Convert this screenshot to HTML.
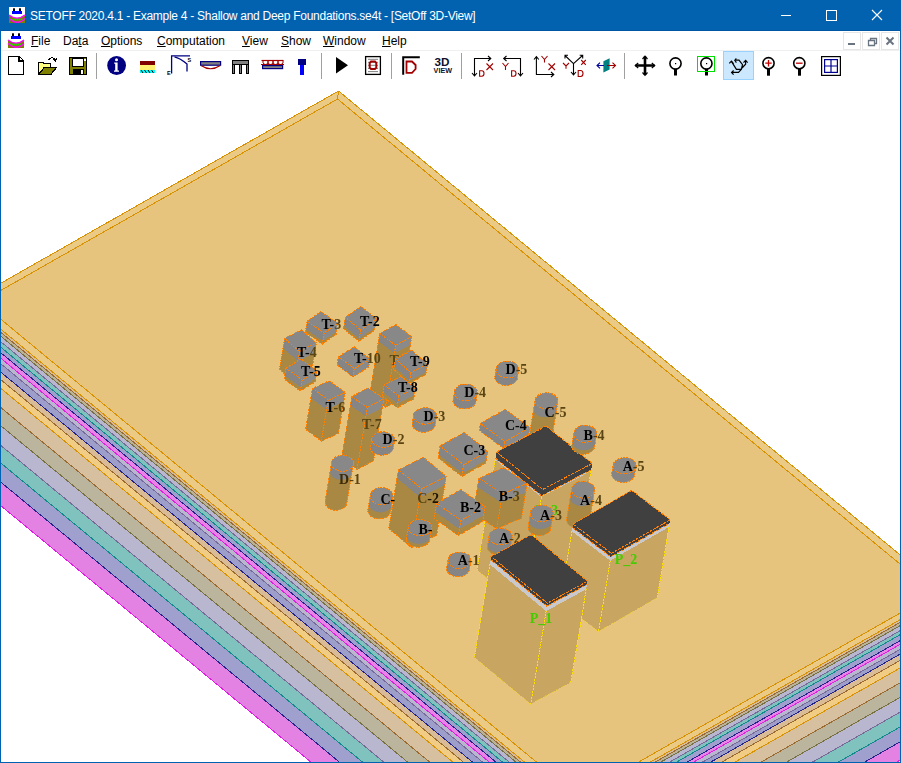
<!DOCTYPE html>
<html><head><meta charset="utf-8">
<style>
html,body{margin:0;padding:0;background:#fff;}
body{width:901px;height:763px;position:relative;overflow:hidden;font-family:"Liberation Sans",sans-serif;}
#title{position:absolute;left:0;top:0;width:901px;height:31px;background:#0262B0;color:#fff;box-shadow:inset 0 -1px 0 #0055A5;}
#title .t{position:absolute;left:30px;top:9px;font-size:12px;line-height:14px;white-space:nowrap;letter-spacing:-0.27px;}
#menu{position:absolute;left:1px;top:31px;width:899px;height:19px;background:#fff;}
#menu span{position:absolute;top:3px;font-size:12px;line-height:14px;color:#000;}
#menu u{text-decoration:underline;text-decoration-thickness:1px;text-underline-offset:1px;}
#sep{position:absolute;left:1px;top:50px;width:899px;height:1px;background:#F0F0F0;}
#tb{position:absolute;left:1px;top:51px;width:899px;height:31px;background:#fff;}
#lb{position:absolute;left:0;top:30px;width:1px;height:733px;background:#0063B1;}
#rb{position:absolute;left:900px;top:30px;width:1px;height:733px;background:#0063B1;}
#bb{position:absolute;left:0;top:762px;width:901px;height:1px;background:#0063B1;}
svg{position:absolute;left:0;top:0;}
text{-webkit-font-smoothing:antialiased;}
#scene{will-change:transform;}
</style></head><body>
<svg id="scene" width="901" height="763" viewBox="0 0 901 763" style="left:0;top:0">
<defs><clipPath id="cv"><rect x="1" y="82" width="899" height="680"/></clipPath></defs>
<g clip-path="url(#cv)" shape-rendering="crispEdges">
<polygon points="338.5,91.0 900.0,554.8 900.0,613.1 578.1,796.6 0.0,318.6 0.0,283.7" fill="#E6C47E"/>
<polygon points="338.5,91.0 900.0,554.8 900.0,564.0 337.5,99.0 0.0,290.9 0.0,283.7" fill="#EBCA86"/>
<polygon points="0.0,318.6 578.1,796.5 578.1,806.4 0.0,328.5" fill="#EBCA86"/>
<polygon points="0.0,328.5 578.1,806.4 578.1,809.6 0.0,331.7" fill="#D9BC96"/>
<polygon points="0.0,331.7 578.1,809.6 578.1,813.5 0.0,335.6" fill="#BAB39A"/>
<polygon points="0.0,335.6 578.1,813.5 578.1,819.0 0.0,341.1" fill="#B9B7D0"/>
<polygon points="0.0,341.1 578.1,819.0 578.1,824.5 0.0,346.6" fill="#80C2BE"/>
<polygon points="0.0,346.6 578.1,824.5 578.1,830.0 0.0,352.1" fill="#A0A0CE"/>
<polygon points="0.0,352.1 578.1,830.0 578.1,835.5 0.0,357.6" fill="#E884E8"/>
<polygon points="0.0,357.6 578.1,835.5 578.1,841.0 0.0,363.1" fill="#B9B7D0"/>
<polygon points="0.0,363.1 578.1,841.0 578.1,849.4 0.0,371.5" fill="#9E9ECA"/>
<polygon points="0.0,371.5 578.1,849.4 578.1,856.9 0.0,379.0" fill="#D9BC96"/>
<polygon points="0.0,379.0 578.1,856.9 578.1,865.6 0.0,387.7" fill="#F0CC85"/>
<polygon points="0.0,387.7 578.1,865.6 578.1,884.8 0.0,406.9" fill="#D6C0A0"/>
<polygon points="0.0,406.9 578.1,884.8 578.1,903.0 0.0,425.1" fill="#BAB59C"/>
<polygon points="0.0,425.1 578.1,903.0 578.1,922.7 0.0,444.8" fill="#B9B7D0"/>
<polygon points="0.0,444.8 578.1,922.7 578.1,940.3 0.0,462.4" fill="#80C2BE"/>
<polygon points="0.0,462.4 578.1,940.3 578.1,959.4 0.0,481.5" fill="#A0A0CE"/>
<polygon points="0.0,481.5 578.1,959.4 578.1,982.9 0.0,505.0" fill="#E482E4"/>
<polygon points="578.1,796.6 900.0,613.1 900.0,619.7 578.1,803.2" fill="#EBCA86"/>
<polygon points="578.1,803.2 900.0,619.7 900.0,622.5 578.1,806.0" fill="#D9BC96"/>
<polygon points="578.1,806.0 900.0,622.5 900.0,625.7 578.1,809.2" fill="#BAB39A"/>
<polygon points="578.1,809.2 900.0,625.7 900.0,630.7 578.1,814.2" fill="#B9B7D0"/>
<polygon points="578.1,814.2 900.0,630.7 900.0,634.7 578.1,818.2" fill="#80C2BE"/>
<polygon points="578.1,818.2 900.0,634.7 900.0,640.7 578.1,824.2" fill="#A0A0CE"/>
<polygon points="578.1,824.2 900.0,640.7 900.0,644.4 578.1,827.9" fill="#E884E8"/>
<polygon points="578.1,827.9 900.0,644.4 900.0,649.5 578.1,833.0" fill="#B9B7D0"/>
<polygon points="578.1,833.0 900.0,649.5 900.0,654.2 578.1,837.7" fill="#9E9ECA"/>
<polygon points="578.1,837.7 900.0,654.2 900.0,660.5 578.1,844.0" fill="#D9BC96"/>
<polygon points="578.1,844.0 900.0,660.5 900.0,668.0 578.1,851.5" fill="#F0CC85"/>
<polygon points="578.1,851.5 900.0,668.0 900.0,682.9 578.1,866.4" fill="#D6C0A0"/>
<polygon points="578.1,866.4 900.0,682.9 900.0,697.4 578.1,880.9" fill="#BAB59C"/>
<polygon points="578.1,880.9 900.0,697.4 900.0,712.2 578.1,895.7" fill="#B9B7D0"/>
<polygon points="578.1,895.7 900.0,712.2 900.0,727.0 578.1,910.5" fill="#80C2BE"/>
<polygon points="578.1,910.5 900.0,727.0 900.0,741.9 578.1,925.4" fill="#A0A0CE"/>
<polygon points="578.1,925.4 900.0,741.9 900.0,760.2 578.1,943.7" fill="#E482E4"/>
<line x1="0.0" y1="318.6" x2="578.1" y2="796.5" stroke="#D89200" stroke-width="1"/>
<line x1="0.0" y1="328.5" x2="578.1" y2="806.4" stroke="#D89200" stroke-width="1"/>
<line x1="0.0" y1="331.7" x2="578.1" y2="809.6" stroke="#9A6A30" stroke-width="1"/>
<line x1="0.0" y1="335.6" x2="578.1" y2="813.5" stroke="#787040" stroke-width="1"/>
<line x1="0.0" y1="341.1" x2="578.1" y2="819.0" stroke="#786A98" stroke-width="1"/>
<line x1="0.0" y1="346.6" x2="578.1" y2="824.5" stroke="#108A8A" stroke-width="1"/>
<line x1="0.0" y1="352.1" x2="578.1" y2="830.0" stroke="#24248A" stroke-width="1"/>
<line x1="0.0" y1="357.6" x2="578.1" y2="835.5" stroke="#E020E0" stroke-width="1"/>
<line x1="0.0" y1="363.1" x2="578.1" y2="841.0" stroke="#786A98" stroke-width="1"/>
<line x1="0.0" y1="371.5" x2="578.1" y2="849.4" stroke="#24248A" stroke-width="1"/>
<line x1="0.0" y1="379.0" x2="578.1" y2="856.9" stroke="#9A6A30" stroke-width="1"/>
<line x1="0.0" y1="387.7" x2="578.1" y2="865.6" stroke="#D89200" stroke-width="1"/>
<line x1="0.0" y1="406.9" x2="578.1" y2="884.8" stroke="#9A6A30" stroke-width="1"/>
<line x1="0.0" y1="425.1" x2="578.1" y2="903.0" stroke="#787040" stroke-width="1"/>
<line x1="0.0" y1="444.8" x2="578.1" y2="922.7" stroke="#786A98" stroke-width="1"/>
<line x1="0.0" y1="462.4" x2="578.1" y2="940.3" stroke="#108A8A" stroke-width="1"/>
<line x1="0.0" y1="481.5" x2="578.1" y2="959.4" stroke="#24248A" stroke-width="1"/>
<line x1="0.0" y1="505.0" x2="578.1" y2="982.9" stroke="#E020E0" stroke-width="1"/>
<line x1="578.1" y1="796.6" x2="900.0" y2="613.1" stroke="#D89200" stroke-width="1"/>
<line x1="578.1" y1="803.2" x2="900.0" y2="619.7" stroke="#D89200" stroke-width="1"/>
<line x1="578.1" y1="806.0" x2="900.0" y2="622.5" stroke="#9A6A30" stroke-width="1"/>
<line x1="578.1" y1="809.2" x2="900.0" y2="625.7" stroke="#787040" stroke-width="1"/>
<line x1="578.1" y1="814.2" x2="900.0" y2="630.7" stroke="#786A98" stroke-width="1"/>
<line x1="578.1" y1="818.2" x2="900.0" y2="634.7" stroke="#108A8A" stroke-width="1"/>
<line x1="578.1" y1="824.2" x2="900.0" y2="640.7" stroke="#24248A" stroke-width="1"/>
<line x1="578.1" y1="827.9" x2="900.0" y2="644.4" stroke="#E020E0" stroke-width="1"/>
<line x1="578.1" y1="833.0" x2="900.0" y2="649.5" stroke="#786A98" stroke-width="1"/>
<line x1="578.1" y1="837.7" x2="900.0" y2="654.2" stroke="#24248A" stroke-width="1"/>
<line x1="578.1" y1="844.0" x2="900.0" y2="660.5" stroke="#9A6A30" stroke-width="1"/>
<line x1="578.1" y1="851.5" x2="900.0" y2="668.0" stroke="#D89200" stroke-width="1"/>
<line x1="578.1" y1="866.4" x2="900.0" y2="682.9" stroke="#9A6A30" stroke-width="1"/>
<line x1="578.1" y1="880.9" x2="900.0" y2="697.4" stroke="#787040" stroke-width="1"/>
<line x1="578.1" y1="895.7" x2="900.0" y2="712.2" stroke="#786A98" stroke-width="1"/>
<line x1="578.1" y1="910.5" x2="900.0" y2="727.0" stroke="#108A8A" stroke-width="1"/>
<line x1="578.1" y1="925.4" x2="900.0" y2="741.9" stroke="#24248A" stroke-width="1"/>
<line x1="578.1" y1="943.7" x2="900.0" y2="760.2" stroke="#E020E0" stroke-width="1"/>
<line x1="0.0" y1="283.7" x2="338.5" y2="91.0" stroke="#D89200" stroke-width="1"/>
<line x1="338.5" y1="91.0" x2="900.0" y2="554.8" stroke="#D89200" stroke-width="1"/>
<line x1="0.0" y1="290.9" x2="337.5" y2="99.0" stroke="#D89200" stroke-width="1"/>
<line x1="337.5" y1="99.0" x2="900.0" y2="564.0" stroke="#D89200" stroke-width="1"/>
<line x1="338.5" y1="91.0" x2="337.5" y2="99.0" stroke="#D89200" stroke-width="1"/>
<polygon points="305.8,329.2 322.9,341.0 322.4,344.0 305.3,332.2" fill="#A98843"/>
<polygon points="322.9,341.0 336.7,331.3 336.2,334.3 322.4,344.0" fill="#A98843"/>
<polygon points="307.1,321.2 324.2,333.0 322.9,341.0 305.8,329.2" fill="#858585"/>
<polygon points="324.2,333.0 338.0,323.3 336.7,331.3 322.9,341.0" fill="#8A8A8A"/>
<polygon points="320.9,311.5 307.1,321.2 324.2,333.0 338.0,323.3" fill="#888888"/>
<polyline points="320.9,311.5 307.1,321.2 324.2,333.0 338.0,323.3 320.9,311.5" fill="none" stroke="#FF8000" stroke-width="1" stroke-dasharray="2,1"/>
<polyline points="307.1,321.2 305.3,332.2 322.4,344.0 336.2,334.3 338.0,323.3" fill="none" stroke="#FF8000" stroke-width="1" stroke-dasharray="2,1"/>
<polyline points="324.2,333.0 322.4,344.0" fill="none" stroke="#FF8000" stroke-width="1" stroke-dasharray="2,1"/>
<text x="321.5" y="328.9" font-family="Liberation Serif" font-weight="bold" font-size="14" text-anchor="start" style="shape-rendering:auto"><tspan fill="#000">T-</tspan><tspan fill="#5A4412">3</tspan></text>
<polygon points="343.9,325.9 359.3,338.5 358.8,341.3 343.4,328.7" fill="#A98843"/>
<polygon points="359.3,338.5 375.1,327.5 374.6,330.3 358.8,341.3" fill="#A98843"/>
<polygon points="345.3,317.3 360.7,329.9 359.3,338.5 343.9,325.9" fill="#858585"/>
<polygon points="360.7,329.9 376.5,318.9 375.1,327.5 359.3,338.5" fill="#8A8A8A"/>
<polygon points="361.1,306.3 345.3,317.3 360.7,329.9 376.5,318.9" fill="#888888"/>
<polyline points="361.1,306.3 345.3,317.3 360.7,329.9 376.5,318.9 361.1,306.3" fill="none" stroke="#FF8000" stroke-width="1" stroke-dasharray="2,1"/>
<polyline points="345.3,317.3 343.4,328.7 358.8,341.3 374.6,330.3 376.5,318.9" fill="none" stroke="#FF8000" stroke-width="1" stroke-dasharray="2,1"/>
<polyline points="360.7,329.9 358.8,341.3" fill="none" stroke="#FF8000" stroke-width="1" stroke-dasharray="2,1"/>
<text x="360" y="326" font-family="Liberation Serif" font-weight="bold" font-size="14" text-anchor="start" style="shape-rendering:auto"><tspan fill="#000">T-2</tspan></text>
<polygon points="283.0,347.8 297.7,361.1 294.2,382.6 279.5,369.3" fill="#A98843"/>
<polygon points="297.7,361.1 314.7,352.4 311.2,373.9 294.2,382.6" fill="#A98843"/>
<polygon points="284.6,338.3 299.3,351.6 297.7,361.1 283.0,347.8" fill="#858585"/>
<polygon points="299.3,351.6 316.3,342.9 314.7,352.4 297.7,361.1" fill="#8A8A8A"/>
<polygon points="301.6,329.6 284.6,338.3 299.3,351.6 316.3,342.9" fill="#888888"/>
<polyline points="301.6,329.6 284.6,338.3 299.3,351.6 316.3,342.9 301.6,329.6" fill="none" stroke="#FF8000" stroke-width="1" stroke-dasharray="2,1"/>
<polyline points="284.6,338.3 279.5,369.3 294.2,382.6 311.2,373.9 316.3,342.9" fill="none" stroke="#FF8000" stroke-width="1" stroke-dasharray="2,1"/>
<polyline points="299.3,351.6 294.2,382.6" fill="none" stroke="#FF8000" stroke-width="1" stroke-dasharray="2,1"/>
<text x="297" y="356.7" font-family="Liberation Serif" font-weight="bold" font-size="14" text-anchor="start" style="shape-rendering:auto"><tspan fill="#000">T-</tspan><tspan fill="#5A4412">4</tspan></text>
<polygon points="338.5,356.6 354.3,368.7 352.9,377.0 337.1,364.9" fill="#858585"/>
<polygon points="354.3,368.7 370.0,358.9 368.6,367.2 352.9,377.0" fill="#8A8A8A"/>
<polygon points="354.2,346.8 338.5,356.6 354.3,368.7 370.0,358.9" fill="#888888"/>
<polyline points="354.2,346.8 338.5,356.6 354.3,368.7 370.0,358.9 354.2,346.8" fill="none" stroke="#FF8000" stroke-width="1" stroke-dasharray="2,1"/>
<polyline points="338.5,356.6 337.1,364.9 352.9,377.0 368.6,367.2 370.0,358.9" fill="none" stroke="#FF8000" stroke-width="1" stroke-dasharray="2,1"/>
<polyline points="354.3,368.7 352.9,377.0" fill="none" stroke="#FF8000" stroke-width="1" stroke-dasharray="2,1"/>
<polygon points="378.4,341.3 394.4,353.3 385.5,407.3 369.5,395.3" fill="#A98843"/>
<polygon points="394.4,353.3 410.5,344.6 401.6,398.6 385.5,407.3" fill="#A98843"/>
<polygon points="379.7,333.3 395.7,345.3 394.4,353.3 378.4,341.3" fill="#858585"/>
<polygon points="395.7,345.3 411.8,336.6 410.5,344.6 394.4,353.3" fill="#8A8A8A"/>
<polygon points="395.8,324.6 379.7,333.3 395.7,345.3 411.8,336.6" fill="#888888"/>
<polyline points="395.8,324.6 379.7,333.3 395.7,345.3 411.8,336.6 395.8,324.6" fill="none" stroke="#FF8000" stroke-width="1" stroke-dasharray="2,1"/>
<polyline points="379.7,333.3 369.5,395.3 385.5,407.3 401.6,398.6 411.8,336.6" fill="none" stroke="#FF8000" stroke-width="1" stroke-dasharray="2,1"/>
<polyline points="395.7,345.3 385.5,407.3" fill="none" stroke="#FF8000" stroke-width="1" stroke-dasharray="2,1"/>
<text x="389.5" y="364.5" font-family="Liberation Serif" font-weight="bold" font-size="14" text-anchor="start" style="shape-rendering:auto"><tspan fill="#5A4412">T</tspan></text>
<text x="354" y="362.8" font-family="Liberation Serif" font-weight="bold" font-size="14" text-anchor="start" style="shape-rendering:auto"><tspan fill="#000">T-</tspan><tspan fill="#5A4412">10</tspan></text>
<polygon points="284.8,375.5 300.9,387.4 300.3,391.0 284.2,379.1" fill="#A98843"/>
<polygon points="300.9,387.4 316.0,378.3 315.4,381.9 300.3,391.0" fill="#A98843"/>
<polygon points="286.0,368.1 302.1,380.0 300.9,387.4 284.8,375.5" fill="#858585"/>
<polygon points="302.1,380.0 317.2,370.9 316.0,378.3 300.9,387.4" fill="#8A8A8A"/>
<polygon points="301.1,359.0 286.0,368.1 302.1,380.0 317.2,370.9" fill="#888888"/>
<polyline points="301.1,359.0 286.0,368.1 302.1,380.0 317.2,370.9 301.1,359.0" fill="none" stroke="#FF8000" stroke-width="1" stroke-dasharray="2,1"/>
<polyline points="286.0,368.1 284.2,379.1 300.3,391.0 315.4,381.9 317.2,370.9" fill="none" stroke="#FF8000" stroke-width="1" stroke-dasharray="2,1"/>
<polyline points="302.1,380.0 300.3,391.0" fill="none" stroke="#FF8000" stroke-width="1" stroke-dasharray="2,1"/>
<text x="301" y="375.5" font-family="Liberation Serif" font-weight="bold" font-size="14" text-anchor="start" style="shape-rendering:auto"><tspan fill="#000">T-5</tspan></text>
<polygon points="394.0,366.6 409.6,380.6 409.2,383.3 393.6,369.3" fill="#A98843"/>
<polygon points="409.6,380.6 426.1,372.0 425.7,374.7 409.2,383.3" fill="#A98843"/>
<polygon points="395.3,358.8 410.9,372.8 409.6,380.6 394.0,366.6" fill="#858585"/>
<polygon points="410.9,372.8 427.4,364.2 426.1,372.0 409.6,380.6" fill="#8A8A8A"/>
<polygon points="411.8,350.2 395.3,358.8 410.9,372.8 427.4,364.2" fill="#888888"/>
<polyline points="411.8,350.2 395.3,358.8 410.9,372.8 427.4,364.2 411.8,350.2" fill="none" stroke="#FF8000" stroke-width="1" stroke-dasharray="2,1"/>
<polyline points="395.3,358.8 393.6,369.3 409.2,383.3 425.7,374.7 427.4,364.2" fill="none" stroke="#FF8000" stroke-width="1" stroke-dasharray="2,1"/>
<polyline points="410.9,372.8 409.2,383.3" fill="none" stroke="#FF8000" stroke-width="1" stroke-dasharray="2,1"/>
<text x="410" y="366.4" font-family="Liberation Serif" font-weight="bold" font-size="14" text-anchor="start" style="shape-rendering:auto"><tspan fill="#000">T-9</tspan></text>
<polygon points="310.9,397.8 326.6,409.6 321.4,441.1 305.7,429.3" fill="#A98843"/>
<polygon points="326.6,409.6 343.6,402.0 338.4,433.5 321.4,441.1" fill="#A98843"/>
<polygon points="312.5,388.3 328.2,400.1 326.6,409.6 310.9,397.8" fill="#858585"/>
<polygon points="328.2,400.1 345.2,392.5 343.6,402.0 326.6,409.6" fill="#8A8A8A"/>
<polygon points="329.5,380.7 312.5,388.3 328.2,400.1 345.2,392.5" fill="#888888"/>
<polyline points="329.5,380.7 312.5,388.3 328.2,400.1 345.2,392.5 329.5,380.7" fill="none" stroke="#FF8000" stroke-width="1" stroke-dasharray="2,1"/>
<polyline points="312.5,388.3 305.7,429.3 321.4,441.1 338.4,433.5 345.2,392.5" fill="none" stroke="#FF8000" stroke-width="1" stroke-dasharray="2,1"/>
<polyline points="328.2,400.1 321.4,441.1" fill="none" stroke="#FF8000" stroke-width="1" stroke-dasharray="2,1"/>
<text x="325.5" y="411.7" font-family="Liberation Serif" font-weight="bold" font-size="14" text-anchor="start" style="shape-rendering:auto"><tspan fill="#000">T</tspan><tspan fill="#5A4412">-6</tspan></text>
<polygon points="383.1,392.2 397.7,403.7 397.0,407.7 382.4,396.2" fill="#A98843"/>
<polygon points="397.7,403.7 414.3,395.4 413.6,399.4 397.0,407.7" fill="#A98843"/>
<polygon points="384.3,384.7 398.9,396.2 397.7,403.7 383.1,392.2" fill="#858585"/>
<polygon points="398.9,396.2 415.5,387.9 414.3,395.4 397.7,403.7" fill="#8A8A8A"/>
<polygon points="400.9,376.4 384.3,384.7 398.9,396.2 415.5,387.9" fill="#888888"/>
<polyline points="400.9,376.4 384.3,384.7 398.9,396.2 415.5,387.9 400.9,376.4" fill="none" stroke="#FF8000" stroke-width="1" stroke-dasharray="2,1"/>
<polyline points="384.3,384.7 382.4,396.2 397.0,407.7 413.6,399.4 415.5,387.9" fill="none" stroke="#FF8000" stroke-width="1" stroke-dasharray="2,1"/>
<polyline points="398.9,396.2 397.0,407.7" fill="none" stroke="#FF8000" stroke-width="1" stroke-dasharray="2,1"/>
<text x="398" y="391.7" font-family="Liberation Serif" font-weight="bold" font-size="14" text-anchor="start" style="shape-rendering:auto"><tspan fill="#000">T-8</tspan></text>
<polygon points="350.3,405.2 365.8,416.2 357.0,469.5 341.5,458.5" fill="#A98843"/>
<polygon points="365.8,416.2 382.4,407.5 373.6,460.8 357.0,469.5" fill="#A98843"/>
<polygon points="351.7,396.5 367.2,407.5 365.8,416.2 350.3,405.2" fill="#858585"/>
<polygon points="367.2,407.5 383.8,398.8 382.4,407.5 365.8,416.2" fill="#8A8A8A"/>
<polygon points="368.3,387.8 351.7,396.5 367.2,407.5 383.8,398.8" fill="#888888"/>
<polyline points="368.3,387.8 351.7,396.5 367.2,407.5 383.8,398.8 368.3,387.8" fill="none" stroke="#FF8000" stroke-width="1" stroke-dasharray="2,1"/>
<polyline points="351.7,396.5 341.5,458.5 357.0,469.5 373.6,460.8 383.8,398.8" fill="none" stroke="#FF8000" stroke-width="1" stroke-dasharray="2,1"/>
<polyline points="367.2,407.5 357.0,469.5" fill="none" stroke="#FF8000" stroke-width="1" stroke-dasharray="2,1"/>
<text x="362" y="428.6" font-family="Liberation Serif" font-weight="bold" font-size="14" text-anchor="start" style="shape-rendering:auto"><tspan fill="#5A4412">T-7</tspan></text>
<path d="M496.0,369.5 L494.8,377.0 A11.4,8.5 0 0 0 517.6,377.0 L518.8,369.5 Z" fill="#858585" style="shape-rendering:auto"/>
<ellipse cx="507.4" cy="369.5" rx="11.4" ry="8.5" fill="#888888" stroke="#FF8000" stroke-width="1" stroke-dasharray="2,1"/>
<path d="M496.0,369.5 L494.8,377.0 A11.4,8.5 0 0 0 517.6,377.0 L518.8,369.5" fill="none" stroke="#FF8000" stroke-width="1" stroke-dasharray="2,1"/>
<text x="505.5" y="373.9" font-family="Liberation Serif" font-weight="bold" font-size="14" text-anchor="start" style="shape-rendering:auto"><tspan fill="#000">D</tspan><tspan fill="#5A4412">-5</tspan></text>
<path d="M454.2,392.5 L452.9,400.5 A11.6,8.5 0 0 0 476.1,400.5 L477.4,392.5 Z" fill="#858585" style="shape-rendering:auto"/>
<ellipse cx="465.8" cy="392.5" rx="11.6" ry="8.5" fill="#888888" stroke="#FF8000" stroke-width="1" stroke-dasharray="2,1"/>
<path d="M454.2,392.5 L452.9,400.5 A11.6,8.5 0 0 0 476.1,400.5 L477.4,392.5" fill="none" stroke="#FF8000" stroke-width="1" stroke-dasharray="2,1"/>
<text x="464.3" y="396.9" font-family="Liberation Serif" font-weight="bold" font-size="14" text-anchor="start" style="shape-rendering:auto"><tspan fill="#000">D</tspan><tspan fill="#5A4412">-4</tspan></text>
<path d="M413.3,416.0 L412.0,424.0 A11.7,8.2 0 0 0 435.4,424.0 L436.7,416.0 Z" fill="#858585" style="shape-rendering:auto"/>
<ellipse cx="425" cy="416" rx="11.7" ry="8.2" fill="#888888" stroke="#FF8000" stroke-width="1" stroke-dasharray="2,1"/>
<path d="M413.3,416.0 L412.0,424.0 A11.7,8.2 0 0 0 435.4,424.0 L436.7,416.0" fill="none" stroke="#FF8000" stroke-width="1" stroke-dasharray="2,1"/>
<text x="423.5" y="420.5" font-family="Liberation Serif" font-weight="bold" font-size="14" text-anchor="start" style="shape-rendering:auto"><tspan fill="#000">D</tspan><tspan fill="#5A4412">-3</tspan></text>
<path d="M371.7,439.6 L370.4,447.4 A11.5,7.8 0 0 0 393.4,447.4 L394.7,439.6 Z" fill="#858585" style="shape-rendering:auto"/>
<ellipse cx="383.2" cy="439.6" rx="11.5" ry="7.8" fill="#888888" stroke="#FF8000" stroke-width="1" stroke-dasharray="2,1"/>
<path d="M371.7,439.6 L370.4,447.4 A11.5,7.8 0 0 0 393.4,447.4 L394.7,439.6" fill="none" stroke="#FF8000" stroke-width="1" stroke-dasharray="2,1"/>
<text x="382.6" y="443.8" font-family="Liberation Serif" font-weight="bold" font-size="14" text-anchor="start" style="shape-rendering:auto"><tspan fill="#000">D</tspan><tspan fill="#5A4412">-2</tspan></text>
<path d="M533.6,409.3 L528.4,440.8 A11.5,8.0 0 0 0 551.4,440.8 L556.6,409.3 Z" fill="#A98843" style="shape-rendering:auto"/>
<path d="M535.0,400.8 L533.6,409.3 A11.5,8.0 0 0 0 556.6,409.3 L558.0,400.8 Z" fill="#858585" style="shape-rendering:auto"/>
<ellipse cx="546.5" cy="400.8" rx="11.5" ry="8.0" fill="#888888" stroke="#FF8000" stroke-width="1" stroke-dasharray="2,1"/>
<path d="M535.0,400.8 L528.4,440.8 A11.5,8.0 0 0 0 551.4,440.8 L558.0,400.8" fill="none" stroke="#FF8000" stroke-width="1" stroke-dasharray="2,1"/>
<text x="544.6" y="416.7" font-family="Liberation Serif" font-weight="bold" font-size="14" text-anchor="start" style="shape-rendering:auto"><tspan fill="#000">C</tspan><tspan fill="#5A4412">-5</tspan></text>
<polygon points="480.4,423.4 505.1,441.7 503.9,448.7 479.2,430.4" fill="#858585"/>
<polygon points="505.1,441.7 529.9,427.5 528.7,434.5 503.9,448.7" fill="#8A8A8A"/>
<polygon points="505.2,409.2 480.4,423.4 505.1,441.7 529.9,427.5" fill="#888888"/>
<polyline points="505.2,409.2 480.4,423.4 505.1,441.7 529.9,427.5 505.2,409.2" fill="none" stroke="#FF8000" stroke-width="1" stroke-dasharray="2,1"/>
<polyline points="480.4,423.4 479.2,430.4 503.9,448.7 528.7,434.5 529.9,427.5" fill="none" stroke="#FF8000" stroke-width="1" stroke-dasharray="2,1"/>
<polyline points="505.1,441.7 503.9,448.7" fill="none" stroke="#FF8000" stroke-width="1" stroke-dasharray="2,1"/>
<text x="504.9" y="429.9" font-family="Liberation Serif" font-weight="bold" font-size="14" text-anchor="start" style="shape-rendering:auto"><tspan fill="#000">C-4</tspan></text>
<path d="M330.0,471.8 L325.0,502.3 A11,8 0 0 0 347.0,502.3 L352.0,471.8 Z" fill="#A98843" style="shape-rendering:auto"/>
<path d="M331.4,463.3 L330.0,471.8 A11,8 0 0 0 352.0,471.8 L353.4,463.3 Z" fill="#858585" style="shape-rendering:auto"/>
<ellipse cx="342.4" cy="463.3" rx="11" ry="8" fill="#888888" stroke="#FF8000" stroke-width="1" stroke-dasharray="2,1"/>
<path d="M331.4,463.3 L325.0,502.3 A11,8 0 0 0 347.0,502.3 L353.4,463.3" fill="none" stroke="#FF8000" stroke-width="1" stroke-dasharray="2,1"/>
<text x="339" y="483.7" font-family="Liberation Serif" font-weight="bold" font-size="14" text-anchor="start" style="shape-rendering:auto"><tspan fill="#3A2A08">D</tspan><tspan fill="#5A4412">-1</tspan></text>
<polygon points="495.2,459.6 541.3,497.1 523.1,607.5 477.0,570.0" fill="#C8A661"/>
<polygon points="541.3,497.1 591.0,471.1 572.8,581.5 523.1,607.5" fill="#C8A661"/>
<polygon points="495.5,458.3 541.6,495.8 541.3,497.1 495.2,459.6" fill="#C9C9CD"/>
<polygon points="541.6,495.8 591.3,469.8 591.0,471.1 541.3,497.1" fill="#C9C9CD"/>
<polygon points="546.2,426.0 496.5,452.0 495.5,458.3 541.6,495.8 591.3,469.8 592.3,463.5" fill="#404040"/>
<polyline points="546.2,426.0 496.5,452.0 542.6,489.5 592.3,463.5 546.2,426.0" fill="none" stroke="#FF8000" stroke-width="1" stroke-dasharray="3,1"/>
<polyline points="495.5,458.3 541.6,495.8 591.3,469.8" fill="none" stroke="#FF8000" stroke-width="1" stroke-dasharray="3,1"/>
<polyline points="495.2,459.6 477.0,570.0" fill="none" stroke="#FFE000" stroke-width="1" stroke-dasharray="2,1"/>
<polyline points="591.0,471.1 572.8,581.5" fill="none" stroke="#FFE000" stroke-width="1" stroke-dasharray="2,1"/>
<polyline points="477.0,570.0 523.1,607.5 572.8,581.5" fill="none" stroke="#FFE000" stroke-width="1" stroke-dasharray="2,1" stroke-opacity="0.35"/>
<polyline points="541.3,497.1 523.1,607.5" fill="none" stroke="#FFE000" stroke-width="1" stroke-dasharray="2,1"/>
<path d="M572.4,441.7 L571.7,445.7 A11.5,8.6 0 0 0 594.7,445.7 L595.4,441.7 Z" fill="#A98843" style="shape-rendering:auto"/>
<path d="M573.7,433.7 L572.4,441.7 A11.5,8.6 0 0 0 595.4,441.7 L596.7,433.7 Z" fill="#858585" style="shape-rendering:auto"/>
<ellipse cx="585.2" cy="433.7" rx="11.5" ry="8.6" fill="#888888" stroke="#FF8000" stroke-width="1" stroke-dasharray="2,1"/>
<path d="M573.7,433.7 L571.7,445.7 A11.5,8.6 0 0 0 594.7,445.7 L596.7,433.7" fill="none" stroke="#FF8000" stroke-width="1" stroke-dasharray="2,1"/>
<text x="583.6" y="439.9" font-family="Liberation Serif" font-weight="bold" font-size="14" text-anchor="start" style="shape-rendering:auto"><tspan fill="#000">B</tspan><tspan fill="#5A4412">-4</tspan></text>
<polygon points="438.6,454.5 462.2,473.4 461.7,476.6 438.1,457.7" fill="#A98843"/>
<polygon points="462.2,473.4 486.4,459.9 485.9,463.1 461.7,476.6" fill="#A98843"/>
<polygon points="440.0,445.9 463.6,464.8 462.2,473.4 438.6,454.5" fill="#858585"/>
<polygon points="463.6,464.8 487.8,451.3 486.4,459.9 462.2,473.4" fill="#8A8A8A"/>
<polygon points="464.2,432.4 440.0,445.9 463.6,464.8 487.8,451.3" fill="#888888"/>
<polyline points="464.2,432.4 440.0,445.9 463.6,464.8 487.8,451.3 464.2,432.4" fill="none" stroke="#FF8000" stroke-width="1" stroke-dasharray="2,1"/>
<polyline points="440.0,445.9 438.1,457.7 461.7,476.6 485.9,463.1 487.8,451.3" fill="none" stroke="#FF8000" stroke-width="1" stroke-dasharray="2,1"/>
<polyline points="463.6,464.8 461.7,476.6" fill="none" stroke="#FF8000" stroke-width="1" stroke-dasharray="2,1"/>
<text x="463.4" y="454.8" font-family="Liberation Serif" font-weight="bold" font-size="14" text-anchor="start" style="shape-rendering:auto"><tspan fill="#000">C-3</tspan></text>
<polygon points="397.0,478.2 420.0,497.2 411.7,547.7 388.7,528.7" fill="#A98843"/>
<polygon points="420.0,497.2 444.9,484.7 436.6,535.2 411.7,547.7" fill="#A98843"/>
<polygon points="398.4,469.7 421.4,488.7 420.0,497.2 397.0,478.2" fill="#858585"/>
<polygon points="421.4,488.7 446.3,476.2 444.9,484.7 420.0,497.2" fill="#8A8A8A"/>
<polygon points="423.3,457.2 398.4,469.7 421.4,488.7 446.3,476.2" fill="#888888"/>
<polyline points="423.3,457.2 398.4,469.7 421.4,488.7 446.3,476.2 423.3,457.2" fill="none" stroke="#FF8000" stroke-width="1" stroke-dasharray="2,1"/>
<polyline points="398.4,469.7 388.7,528.7 411.7,547.7 436.6,535.2 446.3,476.2" fill="none" stroke="#FF8000" stroke-width="1" stroke-dasharray="2,1"/>
<polyline points="421.4,488.7 411.7,547.7" fill="none" stroke="#FF8000" stroke-width="1" stroke-dasharray="2,1"/>
<text x="417.2" y="503.1" font-family="Liberation Serif" font-weight="bold" font-size="14" text-anchor="start" style="shape-rendering:auto"><tspan fill="#5A4412">C</tspan><tspan fill="#1A1204">-2</tspan></text>
<path d="M368.9,504.0 L367.8,510.5 A11.5,8.5 0 0 0 390.8,510.5 L391.9,504.0 Z" fill="#A98843" style="shape-rendering:auto"/>
<path d="M370.2,496.0 L368.9,504.0 A11.5,8.5 0 0 0 391.9,504.0 L393.2,496.0 Z" fill="#858585" style="shape-rendering:auto"/>
<ellipse cx="381.7" cy="496" rx="11.5" ry="8.5" fill="#888888" stroke="#FF8000" stroke-width="1" stroke-dasharray="2,1"/>
<path d="M370.2,496.0 L367.8,510.5 A11.5,8.5 0 0 0 390.8,510.5 L393.2,496.0" fill="none" stroke="#FF8000" stroke-width="1" stroke-dasharray="2,1"/>
<text x="380.5" y="503.7" font-family="Liberation Serif" font-weight="bold" font-size="14" text-anchor="start" style="shape-rendering:auto"><tspan fill="#000">C-</tspan></text>
<path d="M613.1,465.8 L611.7,474.3 A11.5,8.2 0 0 0 634.7,474.3 L636.1,465.8 Z" fill="#858585" style="shape-rendering:auto"/>
<ellipse cx="624.6" cy="465.8" rx="11.5" ry="8.2" fill="#888888" stroke="#FF8000" stroke-width="1" stroke-dasharray="2,1"/>
<path d="M613.1,465.8 L611.7,474.3 A11.5,8.2 0 0 0 634.7,474.3 L636.1,465.8" fill="none" stroke="#FF8000" stroke-width="1" stroke-dasharray="2,1"/>
<text x="622.7" y="471.4" font-family="Liberation Serif" font-weight="bold" font-size="14" text-anchor="start" style="shape-rendering:auto"><tspan fill="#000">A</tspan><tspan fill="#5A4412">-5</tspan></text>
<polygon points="477.4,487.1 501.0,502.8 496.7,528.8 473.1,513.1" fill="#A98843"/>
<polygon points="501.0,502.8 525.7,492.3 521.4,518.3 496.7,528.8" fill="#A98843"/>
<polygon points="478.9,478.1 502.5,493.8 501.0,502.8 477.4,487.1" fill="#858585"/>
<polygon points="502.5,493.8 527.2,483.3 525.7,492.3 501.0,502.8" fill="#8A8A8A"/>
<polygon points="503.6,467.6 478.9,478.1 502.5,493.8 527.2,483.3" fill="#888888"/>
<polyline points="503.6,467.6 478.9,478.1 502.5,493.8 527.2,483.3 503.6,467.6" fill="none" stroke="#FF8000" stroke-width="1" stroke-dasharray="2,1"/>
<polyline points="478.9,478.1 473.1,513.1 496.7,528.8 521.4,518.3 527.2,483.3" fill="none" stroke="#FF8000" stroke-width="1" stroke-dasharray="2,1"/>
<polyline points="502.5,493.8 496.7,528.8" fill="none" stroke="#FF8000" stroke-width="1" stroke-dasharray="2,1"/>
<text x="498.7" y="501.2" font-family="Liberation Serif" font-weight="bold" font-size="14" text-anchor="start" style="shape-rendering:auto"><tspan fill="#000">B-</tspan><tspan fill="#5A4412">3</tspan></text>
<polygon points="435.2,511.9 459.4,529.0 458.3,535.5 434.1,518.4" fill="#A98843"/>
<polygon points="459.4,529.0 483.6,515.2 482.5,521.7 458.3,535.5" fill="#A98843"/>
<polygon points="436.6,503.4 460.8,520.5 459.4,529.0 435.2,511.9" fill="#858585"/>
<polygon points="460.8,520.5 485.0,506.7 483.6,515.2 459.4,529.0" fill="#8A8A8A"/>
<polygon points="460.8,489.6 436.6,503.4 460.8,520.5 485.0,506.7" fill="#888888"/>
<polyline points="460.8,489.6 436.6,503.4 460.8,520.5 485.0,506.7 460.8,489.6" fill="none" stroke="#FF8000" stroke-width="1" stroke-dasharray="2,1"/>
<polyline points="436.6,503.4 434.1,518.4 458.3,535.5 482.5,521.7 485.0,506.7" fill="none" stroke="#FF8000" stroke-width="1" stroke-dasharray="2,1"/>
<polyline points="460.8,520.5 458.3,535.5" fill="none" stroke="#FF8000" stroke-width="1" stroke-dasharray="2,1"/>
<text x="459.9" y="512" font-family="Liberation Serif" font-weight="bold" font-size="14" text-anchor="start" style="shape-rendering:auto"><tspan fill="#000">B-2</tspan></text>
<path d="M406.9,535.7 L406.3,539.0 A11.8,8.2 0 0 0 429.9,539.0 L430.5,535.7 Z" fill="#A98843" style="shape-rendering:auto"/>
<path d="M408.2,527.7 L406.9,535.7 A11.8,8.2 0 0 0 430.5,535.7 L431.8,527.7 Z" fill="#858585" style="shape-rendering:auto"/>
<ellipse cx="420" cy="527.7" rx="11.8" ry="8.2" fill="#888888" stroke="#FF8000" stroke-width="1" stroke-dasharray="2,1"/>
<path d="M408.2,527.7 L406.3,539.0 A11.8,8.2 0 0 0 429.9,539.0 L431.8,527.7" fill="none" stroke="#FF8000" stroke-width="1" stroke-dasharray="2,1"/>
<text x="418.5" y="533.9" font-family="Liberation Serif" font-weight="bold" font-size="14" text-anchor="start" style="shape-rendering:auto"><tspan fill="#000">B-</tspan></text>
<path d="M570.2,497.7 L566.5,519.7 A11.6,8.5 0 0 0 589.8,519.7 L593.4,497.7 Z" fill="#A98843" style="shape-rendering:auto"/>
<path d="M571.5,489.7 L570.2,497.7 A11.6,8.5 0 0 0 593.4,497.7 L594.7,489.7 Z" fill="#858585" style="shape-rendering:auto"/>
<ellipse cx="583.1" cy="489.7" rx="11.6" ry="8.5" fill="#888888" stroke="#FF8000" stroke-width="1" stroke-dasharray="2,1"/>
<path d="M571.5,489.7 L566.5,519.7 A11.6,8.5 0 0 0 589.8,519.7 L594.7,489.7" fill="none" stroke="#FF8000" stroke-width="1" stroke-dasharray="2,1"/>
<text x="580.1" y="504.8" font-family="Liberation Serif" font-weight="bold" font-size="14" text-anchor="start" style="shape-rendering:auto"><tspan fill="#000">A</tspan><tspan fill="#5A4412">-4</tspan></text>
<text x="535.5" y="514.5" font-family="Liberation Serif" font-weight="bold" font-size="14" text-anchor="start" style="shape-rendering:auto"><tspan fill="#44CC00">P_3</tspan></text>
<path d="M529.0,520.9 L527.9,527.4 A11.5,8.3 0 0 0 550.9,527.4 L552.0,520.9 Z" fill="#A98843" style="shape-rendering:auto"/>
<path d="M530.2,513.4 L529.0,520.9 A11.5,8.3 0 0 0 552.0,520.9 L553.2,513.4 Z" fill="#858585" style="shape-rendering:auto"/>
<ellipse cx="541.7" cy="513.4" rx="11.5" ry="8.3" fill="#888888" stroke="#FF8000" stroke-width="1" stroke-dasharray="2,1"/>
<path d="M530.2,513.4 L527.9,527.4 A11.5,8.3 0 0 0 550.9,527.4 L553.2,513.4" fill="none" stroke="#FF8000" stroke-width="1" stroke-dasharray="2,1"/>
<text x="540.1" y="520.3" font-family="Liberation Serif" font-weight="bold" font-size="14" text-anchor="start" style="shape-rendering:auto"><tspan fill="#000">A</tspan><tspan fill="#5A4412">-3</tspan></text>
<path d="M487.6,544.7 L487.3,546.9 A11.6,8.3 0 0 0 510.5,546.9 L510.8,544.7 Z" fill="#A98843" style="shape-rendering:auto"/>
<path d="M489.0,536.5 L487.6,544.7 A11.6,8.3 0 0 0 510.8,544.7 L512.2,536.5 Z" fill="#858585" style="shape-rendering:auto"/>
<ellipse cx="500.6" cy="536.5" rx="11.6" ry="8.3" fill="#888888" stroke="#FF8000" stroke-width="1" stroke-dasharray="2,1"/>
<path d="M489.0,536.5 L487.3,546.9 A11.6,8.3 0 0 0 510.5,546.9 L512.2,536.5" fill="none" stroke="#FF8000" stroke-width="1" stroke-dasharray="2,1"/>
<text x="499" y="543.3" font-family="Liberation Serif" font-weight="bold" font-size="14" text-anchor="start" style="shape-rendering:auto"><tspan fill="#000">A</tspan><tspan fill="#5A4412">-2</tspan></text>
<polygon points="571.8,531.3 610.2,560.7 598.5,631.4 560.1,602.0" fill="#C8A661"/>
<polygon points="610.2,560.7 668.9,527.1 657.2,597.8 598.5,631.4" fill="#C8A661"/>
<polygon points="572.4,527.5 610.8,556.9 610.2,560.7 571.8,531.3" fill="#C9C9CD"/>
<polygon points="610.8,556.9 669.5,523.3 668.9,527.1 610.2,560.7" fill="#C9C9CD"/>
<polygon points="631.7,490.4 573.0,524.0 572.4,527.5 610.8,556.9 669.5,523.3 670.1,519.8" fill="#404040"/>
<polyline points="631.7,490.4 573.0,524.0 611.4,553.4 670.1,519.8 631.7,490.4" fill="none" stroke="#FF8000" stroke-width="1" stroke-dasharray="3,1"/>
<polyline points="572.4,527.5 610.8,556.9 669.5,523.3" fill="none" stroke="#FF8000" stroke-width="1" stroke-dasharray="3,1"/>
<polyline points="571.8,531.3 560.1,602.0" fill="none" stroke="#FFE000" stroke-width="1" stroke-dasharray="2,1"/>
<polyline points="668.9,527.1 657.2,597.8" fill="none" stroke="#FFE000" stroke-width="1" stroke-dasharray="2,1"/>
<polyline points="560.1,602.0 598.5,631.4 657.2,597.8" fill="none" stroke="#FFE000" stroke-width="1" stroke-dasharray="2,1" stroke-opacity="0.35"/>
<polyline points="610.2,560.7 598.5,631.4" fill="none" stroke="#FFE000" stroke-width="1" stroke-dasharray="2,1"/>
<text x="614.7" y="563.9" font-family="Liberation Serif" font-weight="bold" font-size="14" text-anchor="start" style="shape-rendering:auto"><tspan fill="#44CC00">P_2</tspan></text>
<path d="M448.0,560.3 L446.6,568.5 A11.5,8.3 0 0 0 469.6,568.5 L471.0,560.3 Z" fill="#858585" style="shape-rendering:auto"/>
<ellipse cx="459.5" cy="560.3" rx="11.5" ry="8.3" fill="#888888" stroke="#FF8000" stroke-width="1" stroke-dasharray="2,1"/>
<path d="M448.0,560.3 L446.6,568.5 A11.5,8.3 0 0 0 469.6,568.5 L471.0,560.3" fill="none" stroke="#FF8000" stroke-width="1" stroke-dasharray="2,1"/>
<text x="457.8" y="565" font-family="Liberation Serif" font-weight="bold" font-size="14" text-anchor="start" style="shape-rendering:auto"><tspan fill="#000">A</tspan><tspan fill="#5A4412">-1</tspan></text>
<polygon points="489.9,564.5 546.1,611.1 530.7,704.1 474.5,657.5" fill="#C8A661"/>
<polygon points="546.1,611.1 586.2,589.3 570.8,682.3 530.7,704.1" fill="#C8A661"/>
<polygon points="490.7,559.6 546.9,606.2 546.1,611.1 489.9,564.5" fill="#C9C9CD"/>
<polygon points="546.9,606.2 587.0,584.4 586.2,589.3 546.1,611.1" fill="#C9C9CD"/>
<polygon points="531.3,534.7 491.2,556.5 490.7,559.6 546.9,606.2 587.0,584.4 587.5,581.3" fill="#404040"/>
<polyline points="531.3,534.7 491.2,556.5 547.4,603.1 587.5,581.3 531.3,534.7" fill="none" stroke="#FF8000" stroke-width="1" stroke-dasharray="3,1"/>
<polyline points="490.7,559.6 546.9,606.2 587.0,584.4" fill="none" stroke="#FF8000" stroke-width="1" stroke-dasharray="3,1"/>
<polyline points="489.9,564.5 474.5,657.5" fill="none" stroke="#FFE000" stroke-width="1" stroke-dasharray="2,1"/>
<polyline points="586.2,589.3 570.8,682.3" fill="none" stroke="#FFE000" stroke-width="1" stroke-dasharray="2,1"/>
<polyline points="474.5,657.5 530.7,704.1 570.8,682.3" fill="none" stroke="#FFE000" stroke-width="1" stroke-dasharray="2,1" stroke-opacity="0.35"/>
<polyline points="546.1,611.1 530.7,704.1" fill="none" stroke="#FFE000" stroke-width="1" stroke-dasharray="2,1"/>
<text x="529.8" y="623.2" font-family="Liberation Serif" font-weight="bold" font-size="14" text-anchor="start" style="shape-rendering:auto"><tspan fill="#44CC00">P_1</tspan></text>
</g>
</svg>
<div id="title"><div class="t">SETOFF 2020.4.1 - Example 4 - Shallow and Deep Foundations.se4t - [SetOff 3D-View]</div></div>
<div id="menu">
<span style="left:30px"><u>F</u>ile</span>
<span style="left:62px">Da<u>t</u>a</span>
<span style="left:100px"><u>O</u>ptions</span>
<span style="left:156px"><u>C</u>omputation</span>
<span style="left:241px"><u>V</u>iew</span>
<span style="left:280px"><u>S</u>how</span>
<span style="left:322px"><u>W</u>indow</span>
<span style="left:381px"><u>H</u>elp</span>
</div>
<div id="sep"></div>
<div id="tb"></div>
<svg width="901" height="82" viewBox="0 0 901 82" style="position:absolute;left:0;top:0">
<!-- app icons -->
<g transform="translate(9,7)">
  <rect x="0" y="0" width="16" height="16" fill="#fff"/>
  <rect x="0" y="9" width="16" height="7" fill="#808000"/>
  <path d="M0,7.5 Q8,14.5 16,7.5 V9 H0 Z" fill="#fff"/>
  <rect x="4" y="1.3" width="2" height="3" fill="#000"/><rect x="10" y="1.3" width="2" height="3" fill="#000"/>
  <rect x="3" y="4" width="10" height="3" fill="#0000FF"/>
  <path d="M0,8 Q8,14.5 16,8" fill="none" stroke="#FF00FF" stroke-width="1.3"/>
  <path d="M1.5,12.5 h13" stroke="#00FF00" stroke-width="1.6" stroke-dasharray="1.2,0.8"/>
  <path d="M0,11.5 Q8,19 16,11.5" fill="none" stroke="#FF00FF" stroke-width="1.2"/>
</g>
<g transform="translate(8,32)">
  
  <rect x="0" y="9" width="16" height="7" fill="#808000"/>
  <path d="M0,7.5 Q8,14.5 16,7.5 V9 H0 Z" fill="#fff"/>
  <rect x="4" y="1.3" width="2" height="3" fill="#000"/><rect x="10" y="1.3" width="2" height="3" fill="#000"/>
  <rect x="3" y="4" width="10" height="3" fill="#0000FF"/>
  <path d="M0,8 Q8,14.5 16,8" fill="none" stroke="#FF00FF" stroke-width="1.3"/>
  <path d="M1.5,12.5 h13" stroke="#00FF00" stroke-width="1.6" stroke-dasharray="1.2,0.8"/>
  <path d="M0,11.5 Q8,19 16,11.5" fill="none" stroke="#FF00FF" stroke-width="1.2"/>
</g>
<!-- title buttons -->
<rect x="781" y="15" width="10" height="1" fill="#fff"/>
<rect x="826.5" y="10.5" width="10" height="10" fill="none" stroke="#fff" stroke-width="1"/>
<path d="M872,10 L882,20 M882,10 L872,20" stroke="#fff" stroke-width="1.1"/>
<!-- mdi buttons -->
<rect x="843.5" y="32.5" width="17" height="17" fill="#fff" stroke="#E6E6E6"/>
<rect x="862.5" y="32.5" width="17" height="17" fill="#fff" stroke="#E6E6E6"/>
<rect x="881.5" y="32.5" width="17" height="17" fill="#fff" stroke="#E6E6E6"/>
<rect x="848" y="43" width="7" height="2" fill="#6A7480"/>
<path d="M868.5,40.5 h6 v5 h-6 z M870.5,40.5 v-2 h6 v5 h-2" fill="none" stroke="#6A7480" stroke-width="1.3"/>
<path d="M886.5,37.5 L893.5,44.5 M893.5,37.5 L886.5,44.5" stroke="#6A7480" stroke-width="2"/>
<!-- toolbar -->
<g shape-rendering="crispEdges">
<!-- new -->
<path d="M8.5,56.5 H19 L23.5,61 V74.5 H8.5 Z" fill="#fff" stroke="#000" stroke-width="1.3"/>
<path d="M19,56.5 V61 H23.5" fill="#fff" stroke="#000" stroke-width="1.2"/>
<!-- open -->
<path d="M38.5,74.5 V62.5 H43 L44,63.5 H50.5 V67.2" fill="#FFFF80" stroke="#000" stroke-width="1.2"/>
<path d="M38.5,74.5 L44.5,67.2 H56.5 L51,74.5 Z" fill="#808000" stroke="#000" stroke-width="1.2"/>
<path d="M48.5,60 Q52,55.5 55.5,60" fill="none" stroke="#000" stroke-width="1.1"/>
<path d="M53.5,59.5 L55.5,61.5 L56.5,58.5" fill="none" stroke="#000" stroke-width="1.1"/>
<!-- save -->
<rect x="69.5" y="57.5" width="17" height="17" fill="#808000" stroke="#000" stroke-width="1.2"/>
<rect x="72.5" y="58" width="11" height="8" fill="#fff" stroke="#000" stroke-width="1"/>
<rect x="73" y="69" width="10.5" height="5.5" fill="#000"/>
<rect x="80.5" y="70" width="2" height="4" fill="#fff"/>
<rect x="84" y="58.5" width="2" height="2" fill="#fff"/>
<!-- separators -->
<rect x="96" y="53" width="1" height="26" fill="#A0A0A0"/>
<rect x="321" y="53" width="1" height="26" fill="#A0A0A0"/>
<rect x="391" y="53" width="1" height="26" fill="#A0A0A0"/>
<rect x="461" y="53" width="1" height="26" fill="#A0A0A0"/>
<rect x="624" y="53" width="1" height="26" fill="#A0A0A0"/>
</g>
<!-- info -->
<circle cx="116.6" cy="65.5" r="9.4" fill="#000080"/>
<circle cx="116.5" cy="59.7" r="1.5" fill="#fff"/>
<path d="M114.2,62.5 H117.6 V70.6 H119 V71.8 H114 V70.6 H115.2 V63.7 H114.2 Z" fill="#fff"/>
<!-- layers -->
<g shape-rendering="crispEdges">
<rect x="140" y="61" width="15" height="4" fill="#800000"/>
<rect x="140" y="65" width="15" height="5" fill="#FFF070"/>
<rect x="140" y="70" width="15" height="3" fill="#00FFFF"/>
</g>
<path d="M141,70 l2,3 M144.5,70 l2,3 M148,70 l2,3 M151.5,70 l2,3" stroke="#000" stroke-width="1"/>
<!-- curve -->
<g fill="none" stroke="#000080" stroke-width="1.3">
<path d="M171.6,73.5 V55.8 H190"/>
<path d="M174.5,56.8 Q180,58 187,64 V71.5"/>
</g>
<text x="187.5" y="62" font-family="Liberation Sans" font-weight="bold" font-size="5.5" fill="#000">S</text>
<text x="167" y="75" font-family="Liberation Sans" font-weight="bold" font-size="5.5" fill="#000">E</text>
<!-- raft icon -->
<rect x="200.6" y="61.6" width="20" height="3.6" fill="#808080" stroke="#000080" stroke-width="1.2"/>
<path d="M201,65.5 Q210.6,72 220.2,65.5" fill="none" stroke="#A00000" stroke-width="1.1"/>
<!-- table -->
<g shape-rendering="crispEdges">
<rect x="232.5" y="60.5" width="16" height="3.5" fill="#808080" stroke="#000" stroke-width="1"/>
<rect x="232.5" y="64" width="2" height="9" fill="#808080" stroke="#000" stroke-width="1"/>
<rect x="239.5" y="64" width="2" height="9" fill="#808080" stroke="#000" stroke-width="1"/>
<rect x="246.5" y="64" width="2" height="9" fill="#808080" stroke="#000" stroke-width="1"/>
</g>
<!-- springs -->
<path d="M261.5,60.5 H283.5" stroke="#A00000" stroke-width="1.2"/>
<path d="M263,60.5 V63 L265.5,65 L268,63 V60.5 M268,60.5 V63 L270.5,65 L273,63 V60.5 M273,60.5 V63 L275.5,65 L278,63 V60.5 M278,60.5 V63 L280.5,65 L283,63 V60.5" fill="none" stroke="#A00000" stroke-width="1"/>
<path d="M261,64.5 H284" stroke="#A00000" stroke-width="1"/>
<rect x="262.6" y="65.6" width="20" height="3" fill="#808080" stroke="#000080" stroke-width="1.2"/>
<!-- pile -->
<rect x="298" y="59" width="8" height="6" fill="#000080"/>
<rect x="300" y="65" width="4" height="10" fill="#0000FF"/>
<!-- play -->
<path d="M336,57 L348,65.3 L336,73.6 Z" fill="#000"/>
<!-- report -->
<rect x="365.6" y="56.6" width="14.8" height="17.8" fill="#fff" stroke="#000" stroke-width="1.3"/>
<path d="M368,59.3 h10 M368,62.3 h10 M368,65.3 h10 M368,68.5 h10 M368,71.6 h10" stroke="#808080" stroke-width="1"/>
<path d="M371,61.5 h4 l1.3,1.5 v4.5 l-1.3,1.5 h-4 l-1.3,-1.5 v-4.5 z" fill="none" stroke="#A00000" stroke-width="2"/>
<!-- D icon -->
<path d="M403.2,74.8 V57.2 H419.8" fill="none" stroke="#000" stroke-width="2"/>
<path d="M406.5,61.5 V72.8 H412 L415.6,69 V65 L412,61.5 Z" fill="none" stroke="#A00000" stroke-width="1.8"/>
<!-- 3D VIEW -->
<text x="434.6" y="65.8" font-family="Liberation Sans" font-weight="bold" font-size="10.5" fill="#101028" textLength="15" lengthAdjust="spacingAndGlyphs">3D</text>
<text x="433.6" y="73" font-family="Liberation Sans" font-weight="bold" font-size="6.6" fill="#101028" textLength="18.4" lengthAdjust="spacingAndGlyphs">VIEW</text>
<!-- axis icons -->
<g fill="none" stroke="#000" stroke-width="1.1">
<path d="M474.5,75.5 V58.5 H490.5 M472,73 L474.5,75.8 L477,73 M488,56 L490.8,58.5 L488,61"/>
<path d="M504,58.5 H520.5 V75.5 M506.5,56 L503.7,58.5 L506.5,61 M518,73 L520.5,75.8 L523,73"/>
<path d="M536.4,57 V74.5 H553.5 M534,59.5 L536.4,56.7 L538.8,59.5 M551,72 L553.8,74.5 L551,77"/>
<path d="M573.5,63.7 L565,55.5 M573.5,63.7 L582.5,55.5 M573.5,63.7 V74.5 M565,58.5 V55.3 H568 M582.7,58.5 V55.3 H579.7 M571,72 L573.5,74.8 L576,72"/>
</g>
<g fill="none" stroke="#A00000" stroke-width="1.1">
<path d="M486.5,63.5 L493,70 M493,63.5 L486.5,70"/>
<path d="M479.6,70.8 V76.2 H481.8 Q484,76.2 484,73.5 Q484,70.8 481.8,70.8 Z"/>
<path d="M502.5,63 L505.5,66.5 L508.5,63 M505.5,66.5 V70"/>
<path d="M511.6,70.8 V76.2 H513.8 Q516,76.2 516,73.5 Q516,70.8 513.8,70.8 Z"/>
<path d="M541.5,56 L544.5,59.5 L547.5,56 M544.5,59.5 V62.5"/>
<path d="M548.5,63.5 L555,70 M555,63.5 L548.5,70"/>
<path d="M563,63 L566,66 L569,63 M566,66 V68.8"/>
<path d="M581.2,60 L585.8,64.8 M585.8,60 L581.2,64.8"/>
<path d="M578.2,70.5 V76.5 H580.5 Q583,76.5 583,73.5 Q583,70.5 580.5,70.5 Z"/>
</g>
<!-- icon E -->
<path d="M603.4,61.3 L609.6,58.2 V69.5 L603.4,72.6 Z" fill="#008080"/>
<path d="M604,65.5 H597 M600,62.7 L597,65.5 L600,68.3" fill="none" stroke="#0000A0" stroke-width="1.1"/>
<path d="M607,65.5 H615.5 M612.5,62.7 L615.5,65.5 L612.5,68.3" fill="none" stroke="#A00000" stroke-width="1.1"/>
<!-- move -->
<path d="M645,56.5 V75 M635.5,65.5 H654.5" stroke="#000" stroke-width="2.6"/>
<path d="M642.5,59 L645,56.2 L647.5,59 M642.5,72.5 L645,75.3 L647.5,72.5 M638.2,63 L635.3,65.5 L638.2,68 M651.8,63 L654.7,65.5 L651.8,68" fill="none" stroke="#000" stroke-width="1.2"/>
<!-- magnifiers -->
<g fill="none" stroke="#000" stroke-width="1.6">
<circle cx="675.5" cy="63.5" r="5.6"/>
<circle cx="706.4" cy="63.5" r="5.6"/>
<circle cx="768.5" cy="63.2" r="5.6"/>
<circle cx="799.3" cy="63.2" r="5.6"/>
</g>
<g fill="#000">
<rect x="674" y="69" width="3" height="6.5"/>
<rect x="705" y="69" width="3" height="6.5"/>
<rect x="767" y="68.5" width="3" height="7.2"/>
<rect x="798" y="68.5" width="3" height="7.2"/>
<rect x="675" y="63" width="1.2" height="1.2"/>
<rect x="706" y="63" width="1.2" height="1.2"/>
</g>
<rect x="697.5" y="56.5" width="17" height="15" fill="none" stroke="#00E000" stroke-width="1"/>
<path d="M768.5,60 V66.5 M765.3,63.2 H771.7" stroke="#C00000" stroke-width="1.3"/>
<path d="M796,63.2 H802.6" stroke="#C00000" stroke-width="1.3"/>
<!-- rotate (highlighted) -->
<rect x="723.5" y="51.5" width="30" height="28" fill="#CCE8FF" stroke="#99D1FF" stroke-width="1"/>
<g fill="none" stroke="#000" stroke-width="1.2">
<path d="M731.4,61.4 L736.4,69.3 H741.3 L742.5,64.6 L739,60.2 H735.3 M741.3,69.3 L738.5,72.4 H731.8 M742,68 L745.6,64.2 V60.6"/>
<path d="M729.3,63.4 L731.4,61.2 L733.6,63.6 M736.4,58.5 L734.8,60.3 L736.4,62.6 M733.6,70.5 L731.6,72.5 L733.6,74.6 M743.5,62.6 L745.6,60.4 L747.6,62.6"/>
</g>
<!-- grid -->
<rect x="821.6" y="56.6" width="18.8" height="18.8" fill="#fff" stroke="#000" stroke-width="1.2"/>
<rect x="824.6" y="59.6" width="12.8" height="12.8" fill="none" stroke="#000090" stroke-width="1.2"/>
<path d="M831,59.6 V72.4 M824.6,66 H837.4" stroke="#000090" stroke-width="1.2"/>
</svg>

<div id="lb"></div><div id="rb"></div><div id="bb"></div>
</body></html>
